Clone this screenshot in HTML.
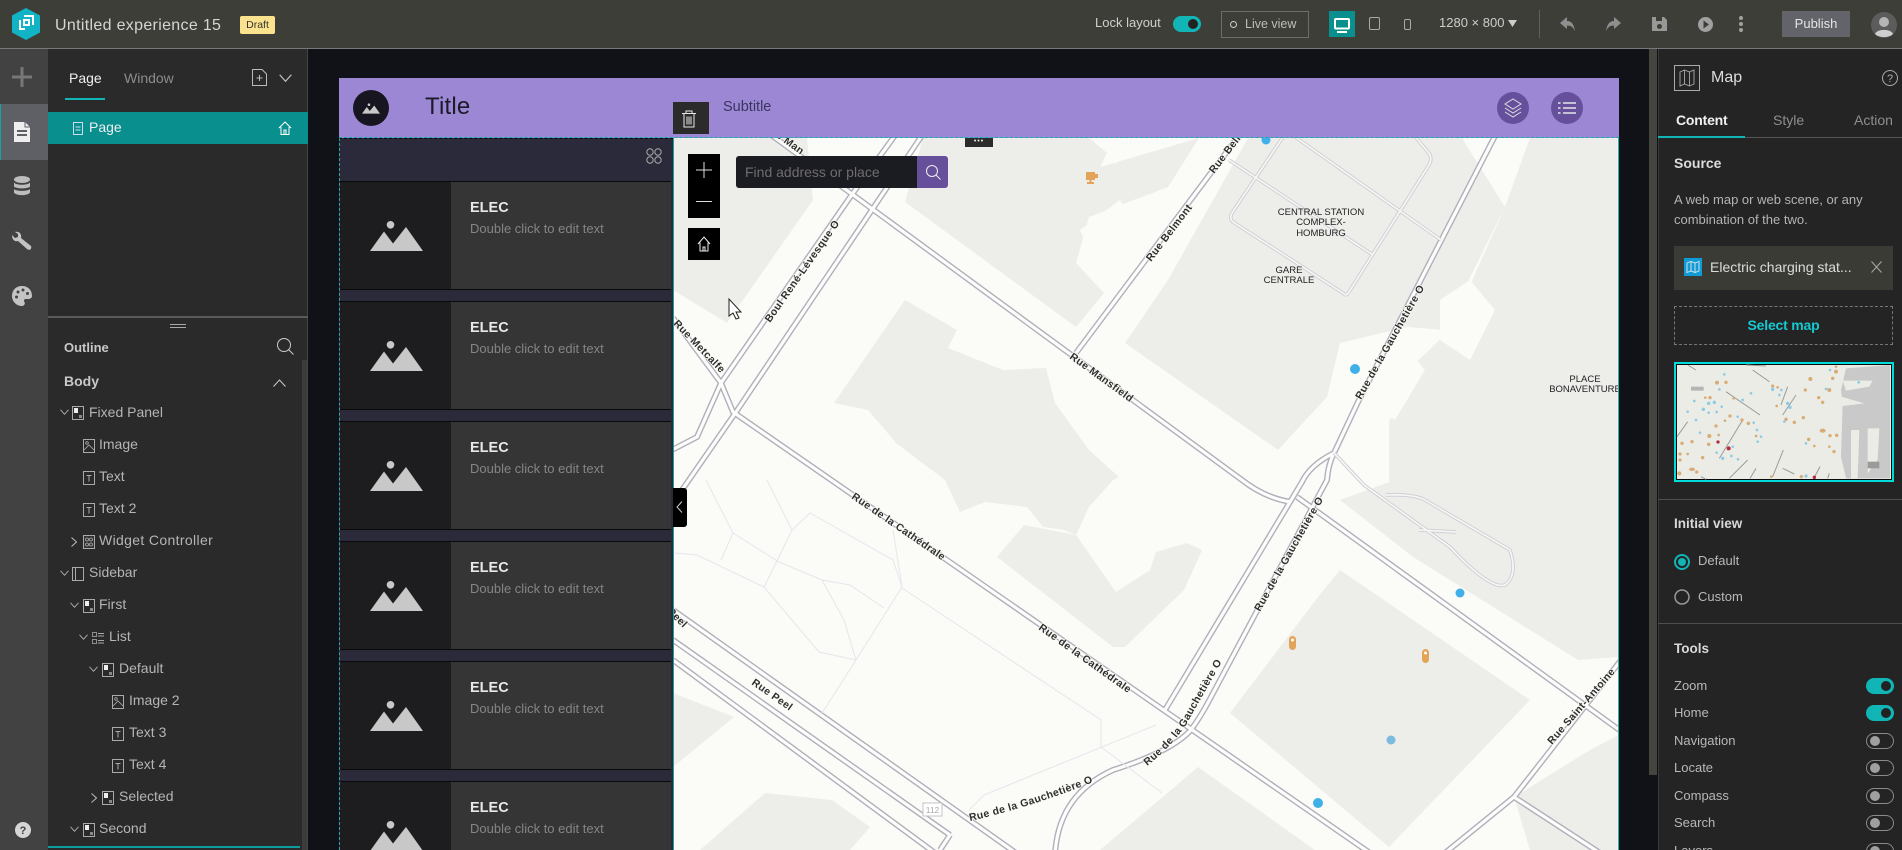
<!DOCTYPE html>
<html><head><meta charset="utf-8"><title>Experience Builder</title>
<style>
html,body{margin:0;padding:0;width:1902px;height:850px;overflow:hidden;background:#111118}
body{position:relative;font-family:"Liberation Sans",sans-serif;color:#ddd}
.a{position:absolute}
.t{position:absolute;white-space:nowrap;line-height:20px;height:20px}
.i{position:absolute;overflow:visible}
.row{color:#b5b5b5;font-size:14px}
.card{position:absolute;left:340px;width:331px;height:108px;background:#353535;border-top:1px solid #0a0a0a;border-bottom:1px solid #0a0a0a;box-sizing:border-box}
.card .im{position:absolute;left:0;top:0;width:111px;height:106px;background:#1d1d1f}
.card .e{position:absolute;left:130px;top:16px;font-size:14.5px;font-weight:bold;color:#e8e8e8;line-height:20px}
.card .d{position:absolute;left:130px;top:37px;font-size:13px;color:#858585;line-height:20px;white-space:nowrap}
.tool{color:#b8b8b8;font-size:13px}
.sw{position:absolute;left:1866px;width:28px;height:16px;border-radius:8px;box-sizing:border-box}
.sw.on{background:#12b5b5}
.sw.on:after{content:"";position:absolute;right:3px;top:3px;width:10px;height:10px;border-radius:50%;background:#222}
.sw.off{border:1px solid #8a8a8a}
.sw.off:after{content:"";position:absolute;left:3px;top:2px;width:10px;height:10px;border-radius:50%;background:#a0a0a0}
text{font-family:"Liberation Sans",sans-serif}
.lb{font-size:10.5px;font-weight:bold;fill:#2e2e2e;letter-spacing:.35px;paint-order:stroke;stroke:#fbfbf6;stroke-width:1.6px}
.lc{font-size:9.5px;fill:#222;text-anchor:middle}
</style></head><body>
<svg width="0" height="0" style="position:absolute">
<defs>
<symbol id="w" viewBox="0 0 12 14"><rect x=".5" y=".5" width="11" height="13" fill="none" stroke="#aaa"/><rect x="2" y="2" width="4" height="5" fill="#eee"/><rect x="7" y="9" width="3" height="3" fill="#888"/></symbol>
<symbol id="im" viewBox="0 0 12 14"><rect x=".5" y=".5" width="11" height="13" fill="none" stroke="#aaa"/><circle cx="4" cy="4" r="1.3" fill="none" stroke="#aaa" stroke-width=".8"/><path d="M1 11L6 6l5 5" fill="none" stroke="#aaa" stroke-width=".8"/></symbol>
<symbol id="tx" viewBox="0 0 12 14"><rect x=".5" y=".5" width="11" height="13" fill="none" stroke="#aaa"/><path d="M3.5 4.5h5M6 4.5v6" fill="none" stroke="#aaa"/></symbol>
<symbol id="ct" viewBox="0 0 12 14"><rect x=".5" y=".5" width="11" height="13" fill="#333" stroke="#aaa"/><circle cx="4" cy="4.5" r="1.5" fill="none" stroke="#aaa" stroke-width=".8"/><circle cx="8" cy="4.5" r="1.5" fill="none" stroke="#aaa" stroke-width=".8"/><circle cx="4" cy="9.5" r="1.5" fill="none" stroke="#aaa" stroke-width=".8"/><circle cx="8" cy="9.5" r="1.5" fill="none" stroke="#aaa" stroke-width=".8"/></symbol>
<symbol id="sb" viewBox="0 0 12 14"><rect x=".5" y=".5" width="11" height="13" fill="none" stroke="#aaa"/><path d="M3.5 .5v13" stroke="#aaa"/></symbol>
<symbol id="ls" viewBox="0 0 12 14"><rect x=".5" y="1.5" width="4" height="4" fill="none" stroke="#aaa" stroke-width=".8"/><rect x=".5" y="8.5" width="4" height="4" fill="none" stroke="#aaa" stroke-width=".8"/><path d="M6 2.5h6M6 5h6M6 9.5h6M6 12h6" stroke="#aaa" stroke-width=".9"/></symbol>
<symbol id="dn" viewBox="0 0 10 6"><path d="M.5.5L5 5.5 9.5.5" fill="none" stroke="#bbb"/></symbol>
<symbol id="rt" viewBox="0 0 6 10"><path d="M.5.5L5.5 5 .5 9.5" fill="none" stroke="#bbb"/></symbol>
<symbol id="mt" viewBox="0 0 53 30"><circle cx="20.500" cy="3.800" r="3.800" fill="#c8c8c8"/><path d="M0 30L14 10.500 23 22.500 36 6 53 30z" fill="#c8c8c8"/></symbol>
</defs></svg>

<!-- top bar -->
<div class="a" style="left:0;top:0;width:1902px;height:48px;background:#3e3e38;border-bottom:1px solid #77777c"></div>
<svg class="i" style="left:12px;top:8px" width="28" height="32" viewBox="0 0 28 32"><path d="M14 0L28 7.500V24.500L14 32 0 24.500V7.500z" fill="#12b3c4"/><path d="M8 12V21H13M12 8H21V17M12 12H17V17H12z" fill="none" stroke="#fff" stroke-width="2"/></svg>
<div class="t" style="left:55px;top:16px;font-size:16px;letter-spacing:.32px;color:#d5d5d5">Untitled experience 15</div>
<div class="a" style="left:240px;top:16px;width:35px;height:18px;background:#fbe28f;border-radius:2px;color:#333;font-size:10.5px;line-height:18px;text-align:center">Draft</div>
<div class="t" style="left:1095px;top:13px;font-size:13px;color:#d0d0d0">Lock layout</div>
<div class="a" style="left:1173px;top:16px;width:28px;height:16px;border-radius:8px;background:#12b5b5"><div class="a" style="right:3px;top:3px;width:10px;height:10px;border-radius:50%;background:#222"></div></div>
<div class="a" style="left:1221px;top:11px;width:86px;height:25px;border:1px solid #6d6d6d"></div>
<div class="a" style="left:1230px;top:21px;width:5px;height:5px;border:1px solid #ccc;border-radius:50%"></div>
<div class="t" style="left:1245px;top:14px;font-size:12.5px;color:#bdbdbd">Live view</div>
<div class="a" style="left:1329px;top:11px;width:26px;height:26px;background:#0a8f8f"></div>
<svg class="i" style="left:1334px;top:18px" width="16" height="15" viewBox="0 0 16 15"><rect x="1" y="1" width="14" height="9.500" rx="1" fill="none" stroke="#fff" stroke-width="2"/><path d="M3 14h10" stroke="#fff" stroke-width="2"/></svg>
<div class="a" style="left:1369px;top:17px;width:9px;height:11px;border:1.500px solid #aaa;border-radius:2px"></div>
<div class="a" style="left:1404px;top:19px;width:5px;height:9px;border:1.500px solid #aaa;border-radius:2px"></div>
<div class="t" style="left:1439px;top:13px;font-size:13px;color:#ccc">1280 × 800</div>
<svg class="i" style="left:1508px;top:20px" width="9" height="7"><path d="M0 0H9L4.500 7z" fill="#ccc"/></svg>
<div class="a" style="left:1539px;top:10px;width:1px;height:28px;background:#5f5f5f"></div>
<svg class="i" style="left:1559px;top:15px" width="18" height="18" viewBox="0 0 18 18"><path d="M1 8L8 2V6C13 6 15 10 16 16 14 12 12 10.500 8 10.500V14z" fill="#8f8f8f"/></svg>
<svg class="i" style="left:1604px;top:15px" width="18" height="18" viewBox="0 0 18 18"><path d="M17 8L10 2V6C5 6 3 10 2 16 4 12 6 10.500 10 10.500V14z" fill="#8f8f8f"/></svg>
<svg class="i" style="left:1652px;top:16px" width="15" height="16" viewBox="0 0 15 16"><path d="M0 1H12L15 4V15H0z" fill="#989898"/><rect x="4" y="1" width="6" height="4" fill="#3e3e38"/><circle cx="7.500" cy="10.500" r="2.500" fill="#3e3e38"/></svg>
<svg class="i" style="left:1698px;top:17px" width="15" height="15" viewBox="0 0 15 15"><circle cx="7.500" cy="7.500" r="7.500" fill="#a0a0a0"/><path d="M5.500 3.500L11 7.500 5.500 11.500z" fill="#3e3e38"/></svg>
<svg class="i" style="left:1739px;top:15px" width="4" height="18"><circle cx="2" cy="3" r="2" fill="#a0a0a0"/><circle cx="2" cy="9" r="2" fill="#a0a0a0"/><circle cx="2" cy="15" r="2" fill="#a0a0a0"/></svg>
<div class="a" style="left:1782px;top:11px;width:68px;height:26px;background:#63636a;color:#e6e6e6;font-size:13px;line-height:25px;text-align:center">Publish</div>
<svg class="i" style="left:1871px;top:12px" width="26" height="26" viewBox="0 0 26 26"><circle cx="13" cy="13" r="13" fill="#5c5c5c"/><circle cx="13" cy="10" r="5" fill="#b5b5b5"/><path d="M4 22C6 16.500 20 16.500 22 22 18 26 8 26 4 22z" fill="#cfcfcf"/></svg>

<!-- left rail -->
<div class="a" style="left:0;top:49px;width:48px;height:801px;background:#424242"></div>
<div class="a" style="left:0;top:104px;width:48px;height:56px;background:#5f5f66;border-left:1px solid #12a5a5;box-sizing:border-box"></div>
<svg class="i" style="left:12px;top:67px" width="20" height="20"><path d="M10 0V20M0 10H20" stroke="#777" stroke-width="3"/></svg>
<svg class="i" style="left:14px;top:122px" width="16" height="20" viewBox="0 0 16 20"><path d="M0 0H11L16 5V20H0z" fill="#eee"/><path d="M11 0V5H16" fill="none" stroke="#5f5f66"/><path d="M3 9H13M3 13H13" stroke="#5f5f66" stroke-width="2"/></svg>
<svg class="i" style="left:14px;top:176px" width="16" height="20" viewBox="0 0 16 20"><ellipse cx="8" cy="3.500" rx="8" ry="3.500" fill="#bdbdbd"/><path d="M0 6.500C2 9.500 14 9.500 16 6.500V10.500C14 13 2 13 0 10.500zM0 13C2 15.500 14 15.500 16 13V16.500C14 20 2 20 0 16.500z" fill="#bdbdbd"/></svg>
<svg class="i" style="left:12px;top:231px" width="20" height="20" viewBox="0 0 20 20"><path d="M3 1C7 0 10 3 9 7L19 15C20 18 18 20 15 18L6 10C2 11 0 8 0 4L3 7 6 6 6 3z" fill="#c4c4c4"/></svg>
<svg class="i" style="left:12px;top:286px" width="20" height="20" viewBox="0 0 20 20"><path d="M10 0C16 0 20 4 20 10 20 12 18 13 16 13H13.500C12 13 11.500 15 12.500 16 13.500 18 12 20 10 20 4 20 0 15 0 10 0 4 4 0 10 0z" fill="#c4c4c4"/><circle cx="6" cy="6" r="1.500" fill="#424242"/><circle cx="11" cy="4" r="1.500" fill="#424242"/><circle cx="15.500" cy="7.500" r="1.500" fill="#424242"/><circle cx="4.500" cy="11" r="1.500" fill="#424242"/></svg>
<svg class="i" style="left:15px;top:822px" width="16" height="16" viewBox="0 0 16 16"><circle cx="8" cy="8" r="8" fill="#d6d6d6"/><text x="8" y="12" font-size="11" font-weight="bold" fill="#424242" text-anchor="middle">?</text></svg>

<!-- left panel -->
<div class="a" style="left:48px;top:49px;width:260px;height:801px;background:#2a2a2a;border-right:1px solid #444;box-sizing:border-box"></div>
<div class="t" style="left:69px;top:68px;font-size:14px;color:#f0f0f0">Page</div>
<div class="t" style="left:124px;top:68px;font-size:14px;color:#8c8c8c">Window</div>
<div class="a" style="left:65px;top:98px;width:40px;height:2px;background:#12b5b5"></div>
<svg class="i" style="left:252px;top:69px" width="15" height="17" viewBox="0 0 15 17"><path d="M.5.500H10L14.500 5V16.500H.5z" fill="none" stroke="#bbb"/><path d="M7.500 6V12M4.500 9H10.500" stroke="#bbb"/></svg>
<svg class="i" style="left:279px;top:74px" width="13" height="8"><use href="#dn" width="13" height="8"/></svg>
<div class="a" style="left:48px;top:112px;width:260px;height:32px;background:#0a8f8f"></div>
<svg class="i" style="left:73px;top:122px" width="10" height="13" viewBox="0 0 10 13"><rect x=".5" y=".5" width="9" height="12" fill="none" stroke="#cde"/><path d="M2.500 5H7.500M2.500 8H7.500" stroke="#cde"/></svg>
<div class="t" style="left:89px;top:117px;font-size:14px;color:#eee">Page</div>
<svg class="i" style="left:278px;top:121px" width="14" height="14" viewBox="0 0 14 14"><path d="M1 7L7 1 13 7M3 6V13.500H11V6M6 13.500V9H8V13.500" fill="none" stroke="#fff"/></svg>
<div class="a" style="left:48px;top:316px;width:260px;height:2px;background:#5a5a5a"></div>
<div class="a" style="left:170px;top:324px;width:16px;height:1px;background:#aaa"></div>
<div class="a" style="left:170px;top:327px;width:16px;height:1px;background:#aaa"></div>
<div class="t" style="left:64px;top:338px;font-size:13px;font-weight:bold;color:#c8c8c8">Outline</div>
<svg class="i" style="left:277px;top:338px" width="17" height="17" viewBox="0 0 17 17"><circle cx="7" cy="7" r="6.500" fill="none" stroke="#ccc"/><path d="M11.500 11.500L16.500 16.500" stroke="#ccc"/></svg>
<div class="t" style="left:64px;top:371px;font-size:14px;font-weight:bold;color:#c8c8c8">Body</div>
<svg class="i" style="left:273px;top:379px" width="13" height="8"><path d="M.5 7.500L6.500 1 12.500 7.500" fill="none" stroke="#ccc"/></svg>
<div class="a" style="left:302px;top:360px;width:5px;height:490px;background:#3c3c3c"></div>

<div class="t row" style="left:89px;top:402px">Fixed Panel</div><svg class="i" style="left:60px;top:409px" width="9" height="6"><use href="#dn" width="9" height="6"/></svg><svg class="i" style="left:72px;top:406px" width="12" height="14"><use href="#w" width="12" height="14"/></svg>
<div class="t row" style="left:99px;top:434px">Image</div><svg class="i" style="left:83px;top:439px" width="12" height="14"><use href="#im" width="12" height="14"/></svg>
<div class="t row" style="left:99px;top:466px">Text</div><svg class="i" style="left:83px;top:471px" width="12" height="14"><use href="#tx" width="12" height="14"/></svg>
<div class="t row" style="left:99px;top:498px">Text 2</div><svg class="i" style="left:83px;top:503px" width="12" height="14"><use href="#tx" width="12" height="14"/></svg>
<div class="t row" style="left:99px;top:530px;letter-spacing:.35px">Widget Controller</div><svg class="i" style="left:71px;top:537px" width="6" height="10"><use href="#rt" width="6" height="10"/></svg><svg class="i" style="left:83px;top:535px" width="12" height="14"><use href="#ct" width="12" height="14"/></svg>
<div class="t row" style="left:89px;top:562px">Sidebar</div><svg class="i" style="left:60px;top:570px" width="9" height="6"><use href="#dn" width="9" height="6"/></svg><svg class="i" style="left:72px;top:567px" width="12" height="14"><use href="#sb" width="12" height="14"/></svg>
<div class="t row" style="left:99px;top:594px">First</div><svg class="i" style="left:70px;top:602px" width="9" height="6"><use href="#dn" width="9" height="6"/></svg><svg class="i" style="left:83px;top:599px" width="12" height="14"><use href="#w" width="12" height="14"/></svg>
<div class="t row" style="left:109px;top:626px">List</div><svg class="i" style="left:79px;top:634px" width="9" height="6"><use href="#dn" width="9" height="6"/></svg><svg class="i" style="left:92px;top:631px" width="12" height="14"><use href="#ls" width="12" height="14"/></svg>
<div class="t row" style="left:119px;top:658px">Default</div><svg class="i" style="left:89px;top:666px" width="9" height="6"><use href="#dn" width="9" height="6"/></svg><svg class="i" style="left:102px;top:663px" width="12" height="14"><use href="#w" width="12" height="14"/></svg>
<div class="t row" style="left:129px;top:690px">Image 2</div><svg class="i" style="left:112px;top:695px" width="12" height="14"><use href="#im" width="12" height="14"/></svg>
<div class="t row" style="left:129px;top:722px">Text 3</div><svg class="i" style="left:112px;top:727px" width="12" height="14"><use href="#tx" width="12" height="14"/></svg>
<div class="t row" style="left:129px;top:754px">Text 4</div><svg class="i" style="left:112px;top:759px" width="12" height="14"><use href="#tx" width="12" height="14"/></svg>
<div class="t row" style="left:119px;top:786px">Selected</div><svg class="i" style="left:91px;top:793px" width="6" height="10"><use href="#rt" width="6" height="10"/></svg><svg class="i" style="left:102px;top:791px" width="12" height="14"><use href="#w" width="12" height="14"/></svg>
<div class="t row" style="left:99px;top:818px">Second</div><svg class="i" style="left:70px;top:826px" width="9" height="6"><use href="#dn" width="9" height="6"/></svg><svg class="i" style="left:83px;top:823px" width="12" height="14"><use href="#w" width="12" height="14"/></svg>
<div class="a" style="left:48px;top:846px;width:252px;height:2px;background:#0f9c9c"></div>

<!-- canvas: page -->
<div class="a" style="left:339px;top:78px;width:1280px;height:60px;background:#9c87d5"></div>
<div class="a" style="left:353px;top:90px;width:36px;height:36px;border-radius:50%;background:#17151f"></div>
<svg class="i" style="left:362px;top:102px" width="18" height="13"><use href="#mt" width="18" height="13"/></svg>
<div class="t" style="left:425px;top:92px;font-size:24px;line-height:30px;height:30px;color:#1a1a28;letter-spacing:.2px">Title</div>
<div class="t" style="left:723px;top:97px;font-size:14.5px;color:#3a3560">Subtitle</div>
<div class="a" style="left:1497px;top:92px;width:32px;height:32px;border-radius:50%;background:#66509c"></div>
<svg class="i" style="left:1504px;top:98px" width="18" height="20" viewBox="0 0 18 20" fill="none" stroke="#ddd"><path d="M9 1L17 6 9 11 1 6z"/><path d="M1 10L9 15 17 10M1 14L9 19 17 14"/></svg>
<div class="a" style="left:1551px;top:92px;width:32px;height:32px;border-radius:50%;background:#66509c"></div>
<svg class="i" style="left:1558px;top:101px" width="18" height="14" stroke="#e6e6e6" stroke-width="1.400"><path d="M5 2H18M5 7H18M5 12H18M0 2H2.500M0 7H2.500M0 12H2.500"/></svg>

<!-- sidebar -->
<div class="a" style="left:339px;top:138px;width:334px;height:712px;background:#2a2a3a;border-left:1px dashed #2aa5a5;border-top:1px dashed #0b0b0b;box-sizing:border-box"></div>
<svg class="i" style="left:646px;top:148px" width="16" height="16" fill="none" stroke="#aaa"><circle cx="4" cy="4" r="3.200"/><circle cx="12" cy="4" r="3.200"/><circle cx="4" cy="12" r="3.200"/><circle cx="12" cy="12" r="3.200"/></svg>
<div class="card" style="top:181px;height:109px"><div class="im" style="height:107px"></div><div class="e">ELEC</div><div class="d">Double click to edit text</div><svg class="i" style="left:30px;top:39px" width="53" height="30"><use href="#mt" width="53" height="30"/></svg></div>
<div class="card" style="top:301px;height:109px"><div class="im" style="height:107px"></div><div class="e">ELEC</div><div class="d">Double click to edit text</div><svg class="i" style="left:30px;top:39px" width="53" height="30"><use href="#mt" width="53" height="30"/></svg></div>
<div class="card" style="top:421px;height:109px"><div class="im" style="height:107px"></div><div class="e">ELEC</div><div class="d">Double click to edit text</div><svg class="i" style="left:30px;top:39px" width="53" height="30"><use href="#mt" width="53" height="30"/></svg></div>
<div class="card" style="top:541px;height:109px"><div class="im" style="height:107px"></div><div class="e">ELEC</div><div class="d">Double click to edit text</div><svg class="i" style="left:30px;top:39px" width="53" height="30"><use href="#mt" width="53" height="30"/></svg></div>
<div class="card" style="top:661px;height:109px"><div class="im" style="height:107px"></div><div class="e">ELEC</div><div class="d">Double click to edit text</div><svg class="i" style="left:30px;top:39px" width="53" height="30"><use href="#mt" width="53" height="30"/></svg></div>
<div class="card" style="top:781px;height:109px"><div class="im" style="height:107px"></div><div class="e">ELEC</div><div class="d">Double click to edit text</div><svg class="i" style="left:30px;top:39px" width="53" height="30"><use href="#mt" width="53" height="30"/></svg></div>

<!-- map -->
<svg class="a" style="left:673px;top:138px;background:#fbfbf7" width="946" height="712" viewBox="673 138 946 712">
<defs>
<g id="r" fill="none">
<path d="M923 134L736 412 673 503"/>
<path d="M896 134L853 193 721 383 697 437 672 450"/>
<path d="M1240 134L1076 353"/>
<path d="M770 134L1242 480Q1265 498 1291 502"/>
<path d="M1297 497L1625 734"/>
<path d="M1496 134L1358 402 1334 453Q1310 465 1302 482L1165 710"/>
<path d="M1334 453Q1328 465 1327 480L1211 697Q1200 718 1190 731Q1170 752 1113 770Q1058 795 1055 855"/>
<path d="M673 318L721 383 733 412 1370 853"/>
<path d="M673 610L1016 853"/>
<path d="M673 640L950 835"/>
<path d="M673 660L935 853"/>
<path d="M950 835L940 850"/>
<path d="M1445 853L1514 797 1625 655"/>
<path d="M1514 797L1600 853"/>
</g>
<g id="r2" fill="none">
<path d="M1285 134L1232 213Q1229 218 1233 222L1343 293Q1346 297 1349 292L1429 165Q1433 158 1428 152L1413 134"/>
<path d="M1229 160L1373 255"/>
<path d="M1291 134L1441 240"/>
<path d="M1334 453L1364 485 1450 547Q1490 590 1505 585 1518 575 1510 550L1425 500Q1415 494 1386 495"/>
<path d="M1419 530L1456 532"/>
</g>
</defs>
<g fill="#ededea">
<path d="M673 138H807L813 200 727 323 673 290z"/>
<path d="M923 138H1089L1107 153 1100 167 1199 138 1168 187 1089 217 1076 263 1104 293 1076 327 905 202z"/>
<path d="M1248 138H1462L1505 207 1444 330 1407 327 1340 343 1327 397 1278 450 1125 343 1168 280z"/>
<path d="M1530 138H1619V490H1389V423L1401 377 1450 330 1505 207z"/>
<path d="M905 300L957 330 948 348 1003 370 1046 368 1055 403 1089 450 1119 477 1113 480 1089 507 1076 535 1064 530 1043 527 1027 507 985 502 960 512 945 480 896 443 868 410 834 403z"/>
<path d="M1024 525L1076 535 1116 592 1150 570 1156 552 1187 543 1202 550 1184 590 1125 647 1113 647 997 557z"/>
<path d="M1340 500L1395 480H1619V657L1578 660 1413 557z"/>
<path d="M1340 570L1530 700 1389 847 1230 713 1318 597z"/>
<path d="M1590 750L1619 735V850H1530L1514 797z"/>
<path d="M1198 767L1315 850H1100z"/>
<path d="M765 793L832 800 870 827 850 850H700z"/>
<path d="M673 693L734 717 673 767z"/>
</g>
<g fill="#fbfbf7">
<path d="M1440 300L1470 280 1495 310 1470 360 1440 340z"/>
<path d="M1080 230L1120 200 1150 250 1110 300z"/>
<path d="M1360 400L1400 340 1425 370 1395 420z"/>
<path d="M1105 138L1130 138 1115 165z"/>
</g>
<use href="#r" stroke="#b0b0bc" stroke-width="6"/>
<use href="#r" stroke="#fdfdfb" stroke-width="3.200"/>
<use href="#r2" stroke="#cbcbd4" stroke-width="3.500"/>
<use href="#r2" stroke="#f6f6f2" stroke-width="1.800"/>
<g fill="none" stroke="#e6e6ee" stroke-width="1">
<path d="M767 480L792 530 776 563 764 587 819 652 856 660"/>
<path d="M902 587L856 660 822 713"/>
<path d="M675 553L697 555 764 587"/>
<path d="M706 480L733 533 721 560"/>
<path d="M733 533L779 562 822 580 850 585 884 608"/>
<path d="M810 513L792 530"/>
<path d="M810 513L893 560 902 587"/>
<path d="M902 588L1101 720 1101 747 1162 793"/>
<path d="M1156 725L984 795 969 810"/>
<path d="M822 580L844 620 856 660"/>
<path d="M893 530L902 587"/>
</g>
<rect x="923" y="803" width="19" height="13" fill="#fff" stroke="#c4c4c4"/>
<text x="932.500" y="813" font-size="8.500" fill="#aaa" text-anchor="middle">112</text>
<g fill="#40b0e8">
<circle cx="1355" cy="369" r="5"/><circle cx="1266" cy="140" r="4.500"/><circle cx="1460" cy="593" r="4.500"/><circle cx="1391" cy="740" r="4.500" fill="#7cbbe0"/><circle cx="1318" cy="803" r="5"/>
</g>
<g fill="#e3a45a">
<path d="M1086 172H1095V174H1098V178H1095V180H1091.500V182H1094V184H1087V182H1089.500V180H1086z"/>
<rect x="1289" y="636" width="7" height="14" rx="3.500"/><rect x="1422" y="649" width="7" height="14" rx="3.500"/>
<circle cx="1292.500" cy="640" r="1.500" fill="#fff"/><circle cx="1425.500" cy="653" r="1.500" fill="#fff"/>
</g>
<text class="lb" transform="translate(770 323) rotate(-55)">Boul René-Lévesque O</text>
<text class="lb" transform="translate(1151 262) rotate(-52.600)">Rue Belmont</text>
<text class="lb" transform="translate(1214 174) rotate(-52.600)">Rue Belmont</text>
<text class="lb" text-anchor="end" transform="translate(801 155) rotate(36)">Rue Man</text>
<text class="lb" transform="translate(1069 358) rotate(36)">Rue Mansfield</text>
<text class="lb" transform="translate(673 324) rotate(46)">Rue Metcalfe</text>
<text class="lb" transform="translate(1361 400) rotate(-60.500)">Rue de la Gauchetière O</text>
<text class="lb" transform="translate(1260 612) rotate(-60.600)">Rue de la Gauchetière O</text>
<path id="gp" d="M1147 766Q1170 748 1186 725L1240 630" fill="none"/>
<text class="lb"><textPath href="#gp">Rue de la Gauchetière O</textPath></text>
<path id="gq" d="M970 821Q1040 805 1110 775" fill="none"/>
<text class="lb"><textPath href="#gq">Rue de la Gauchetière O</textPath></text>
<text class="lb" transform="translate(851 498) rotate(34.500)">Rue de la Cathédrale</text>
<text class="lb" transform="translate(1038 629) rotate(35.500)">Rue de la Cathédrale</text>
<text class="lb" transform="translate(751 684) rotate(35)">Rue Peel</text>
<text class="lb" transform="translate(667 612) rotate(45)">Peel</text>
<text class="lb" transform="translate(1552 745) rotate(-49)">Rue Saint-Antoine</text>
<g>
<text class="lc" x="1321" y="215">CENTRAL STATION</text>
<text class="lc" x="1321" y="225">COMPLEX-</text>
<text class="lc" x="1321" y="236">HOMBURG</text>
<text class="lc" x="1289" y="273">GARE</text>
<text class="lc" x="1289" y="283">CENTRALE</text>
<text class="lc" x="1585" y="382">PLACE</text>
<text class="lc" x="1585" y="392">BONAVENTURE</text>
</g>
<path d="M729 299V316L733 313 736 319 739 318 736 312H741z" fill="#fff" stroke="#222"/>
</svg>
<div class="a" style="left:339px;top:137px;width:1280px;border-top:1px dashed #0fb0b0"></div>
<div class="a" style="left:673px;top:138px;width:1px;height:712px;background:#1aa0a0"></div>
<div class="a" style="left:1618px;top:138px;width:1px;height:712px;background:#1ab5b5"></div>
<div class="a" style="left:673px;top:102px;width:36px;height:32px;background:#2b2b2b"></div>
<svg class="i" style="left:681px;top:110px" width="16" height="18" viewBox="0 0 16 18" fill="none" stroke="#e8e8e8"><path d="M1 3.500H15M5 3.500V1H11V3.500M3 3.500V17H13V3.500M6 6.500V14.500M8 6.500V14.500M10 6.500V14.500"/></svg>
<div class="a" style="left:965px;top:138px;width:28px;height:9px;background:#2b2b2b;color:#eee;font-size:7px;line-height:8px;text-align:center;letter-spacing:1px;overflow:hidden">•••</div>
<div class="a" style="left:688px;top:154px;width:32px;height:64px;background:#000"></div>
<svg class="i" style="left:696px;top:162px" width="16" height="48" stroke="#ddd"><path d="M8 0V16M0 8H16M0 39.500H16"/></svg>
<div class="a" style="left:688px;top:228px;width:32px;height:32px;background:#000"></div>
<svg class="i" style="left:696px;top:236px" width="16" height="16" viewBox="0 0 16 16" fill="none" stroke="#eee"><path d="M2 8L8 1 14 8M4 6.500V15H12V6.500M7 15V11H9V15"/></svg>
<div class="a" style="left:736px;top:156px;width:181px;height:32px;background:#1b1b22;border-radius:3px 0 0 3px"></div>
<div class="t" style="left:745px;top:162px;font-size:14px;color:#6e6e6e">Find address or place</div>
<div class="a" style="left:917px;top:156px;width:31px;height:32px;background:#66509c;border-radius:0 3px 3px 0"></div>
<svg class="i" style="left:925px;top:164px" width="16" height="16" fill="none" stroke="#eee"><circle cx="7" cy="7" r="5.500"/><path d="M11 11L15.500 15.500"/></svg>
<div class="a" style="left:673px;top:488px;width:14px;height:39px;background:#000;border-radius:0 3px 3px 0"></div>
<svg class="i" style="left:676px;top:501px" width="7" height="12"><path d="M6 .5L1 6 6 11.500" fill="none" stroke="#ccc"/></svg>

<!-- scrollbar + right panel -->
<div class="a" style="left:1649px;top:49px;width:8px;height:726px;background:#45453f"></div>
<div class="a" style="left:1658px;top:49px;width:244px;height:801px;background:#252424;border-left:1px solid #3a3a3a;box-sizing:border-box"></div>
<svg class="i" style="left:1674px;top:65px" width="26" height="26" viewBox="0 0 26 26" fill="none" stroke="#aaa"><rect x=".5" y=".5" width="25" height="25"/><path d="M6 7L10.500 5 15.500 7 20 5V19L15.500 21 10.500 19 6 21zM10.500 5V19M15.500 7V21" stroke-width=".9"/></svg>
<div class="t" style="left:1711px;top:68px;font-size:16px;color:#ddd">Map</div>
<svg class="i" style="left:1882px;top:70px" width="16" height="16" viewBox="0 0 16 16" fill="none" stroke="#aaa"><circle cx="8" cy="8" r="7.500"/><text x="8" y="12" font-size="11" fill="#aaa" stroke="none" text-anchor="middle">?</text></svg>
<div class="t" style="left:1676px;top:110px;font-size:14px;font-weight:bold;color:#f0f0f0;letter-spacing:-.2px">Content</div>
<div class="t" style="left:1773px;top:110px;font-size:14px;color:#8e8e8e">Style</div>
<div class="t" style="left:1854px;top:110px;font-size:14px;color:#8e8e8e">Action</div>
<div class="a" style="left:1658px;top:137px;width:244px;height:1px;background:#555"></div>
<div class="a" style="left:1658px;top:136px;width:87px;height:2px;background:#12b5b5"></div>
<div class="t" style="left:1674px;top:153px;font-size:14px;font-weight:bold;color:#ddd">Source</div>
<div class="t" style="left:1674px;top:190px;font-size:13px;color:#b3b3b3">A web map or web scene, or any</div>
<div class="t" style="left:1674px;top:210px;font-size:13px;color:#b3b3b3">combination of the two.</div>
<div class="a" style="left:1674px;top:246px;width:219px;height:44px;background:#3b3b36"></div>
<div class="a" style="left:1684px;top:258px;width:18px;height:18px;background:#0f9bd8"></div>
<svg class="i" style="left:1686px;top:261px" width="14" height="12" fill="none" stroke="#e8e8e8" stroke-width=".9"><path d="M1 2L5 .5 9 2 13 .5V10L9 11.500 5 10 1 11.500zM5 .5V10M9 2V11.500"/></svg>
<div class="t" style="left:1710px;top:257px;font-size:14px;color:#dcdcdc">Electric charging stat...</div>
<svg class="i" style="left:1871px;top:261px" width="11" height="12" stroke="#aaa"><path d="M.5 .5L10.500 11.500M10.500 .5L.5 11.500"/></svg>
<div class="a" style="left:1674px;top:306px;width:219px;height:39px;border:1px dashed #777;box-sizing:border-box"></div>
<div class="t" style="left:1674px;top:315px;width:219px;text-align:center;font-size:14px;font-weight:bold;color:#14c9d0;letter-spacing:-.2px">Select map</div>

<svg class="a" style="left:1674px;top:362px" width="220" height="120" viewBox="4 6 660 360">
<rect x="4" y="6" width="660" height="360" fill="#00dcdc"/>
<rect x="10" y="12" width="648" height="348" fill="#0a0a0a"/>
<rect x="13" y="15" width="642" height="342" fill="#ececE6"/>
<path d="M520 25L652 15V355H520L505 290 510 130 505 90z" fill="#c9c9c9"/>
<path d="M510 62H600L590 80 520 92zM505 110L575 130 510 138zM535 210H560L555 355H535zM585 205H620L615 300 585 340z" fill="#ececE6"/>
<rect x="585" y="305" width="35" height="20" fill="#9a9a9a"/>
<rect x="55" y="80" width="38" height="12" fill="#b5b5b5"/>
<g stroke="#9a9a9a" stroke-width="3" fill="none">
<path d="M160 95L262 165M240 30L290 65M13 230L45 185M345 80L325 135M370 105L330 165M210 180L140 295M225 300L170 355M250 325L232 355M332 270L300 350M442 320L425 352M330 325L365 342M470 340L465 355M45 15L70 30M85 350L100 358M220 15L280 18"/>
</g>
<g fill="#d8ac74">
<circle cx="133" cy="68" r="6"/><circle cx="160" cy="67" r="5"/><circle cx="112" cy="113" r="5"/><circle cx="98" cy="113" r="4"/><circle cx="183" cy="115" r="4"/><circle cx="172" cy="168" r="5"/><circle cx="157" cy="182" r="4"/><circle cx="208" cy="180" r="5"/><circle cx="227" cy="190" r="5"/><circle cx="130" cy="198" r="5"/><circle cx="110" cy="228" r="6"/><circle cx="138" cy="225" r="4"/><circle cx="108" cy="253" r="5"/><circle cx="58" cy="245" r="5"/><circle cx="28" cy="250" r="5"/><circle cx="22" cy="282" r="5"/><circle cx="22" cy="300" r="5"/><circle cx="45" cy="282" r="4"/><circle cx="90" cy="293" r="5"/><circle cx="20" cy="340" r="6"/><circle cx="72" cy="336" r="5"/><circle cx="413" cy="57" r="6"/><circle cx="490" cy="35" r="6"/><circle cx="480" cy="55" r="5"/><circle cx="398" cy="90" r="5"/><circle cx="438" cy="113" r="5"/><circle cx="450" cy="127" r="5"/><circle cx="470" cy="90" r="6"/><circle cx="300" cy="78" r="5"/><circle cx="315" cy="82" r="4"/><circle cx="340" cy="178" r="5"/><circle cx="365" cy="187" r="5"/><circle cx="392" cy="173" r="5"/><circle cx="408" cy="238" r="5"/><circle cx="425" cy="258" r="4"/><circle cx="470" cy="260" r="4"/><circle cx="484" cy="275" r="5"/><circle cx="472" cy="227" r="5"/><circle cx="492" cy="226" r="5"/><circle cx="250" cy="228" r="4"/><circle cx="312" cy="138" r="4"/><circle cx="386" cy="350" r="5"/><circle cx="296" cy="350" r="4"/><circle cx="490" cy="20" r="4"/><ellipse cx="450" cy="212" rx="9" ry="6"/><ellipse cx="58" cy="328" rx="9" ry="5"/>
</g>
<g fill="#8dcbe6">
<circle cx="155" cy="43" r="4"/><circle cx="140" cy="88" r="4"/><circle cx="65" cy="123" r="4"/><circle cx="108" cy="130" r="5"/><circle cx="125" cy="127" r="5"/><circle cx="92" cy="148" r="5"/><circle cx="108" cy="158" r="4"/><circle cx="132" cy="156" r="4"/><circle cx="147" cy="140" r="4"/><circle cx="45" cy="155" r="4"/><circle cx="70" cy="180" r="4"/><circle cx="82" cy="218" r="4"/><circle cx="195" cy="170" r="4"/><circle cx="235" cy="100" r="4"/><circle cx="210" cy="120" r="4"/><circle cx="243" cy="188" r="4"/><circle cx="253" cy="210" r="4"/><circle cx="265" cy="230" r="4"/><circle cx="255" cy="245" r="4"/><circle cx="180" cy="260" r="4"/><circle cx="132" cy="278" r="4"/><circle cx="150" cy="295" r="5"/><circle cx="176" cy="288" r="4"/><circle cx="196" cy="298" r="4"/><circle cx="300" cy="88" r="5"/><circle cx="326" cy="90" r="4"/><circle cx="320" cy="105" r="4"/><circle cx="345" cy="130" r="5"/><circle cx="352" cy="142" r="5"/><circle cx="335" cy="185" r="4"/><circle cx="400" cy="250" r="4"/><circle cx="460" cy="87" r="4"/><circle cx="472" cy="30" r="4"/><circle cx="558" cy="67" r="4"/><circle cx="400" cy="348" r="5"/>
</g>
<g fill="#b52a3c"><circle cx="136" cy="246" r="5"/><circle cx="168" cy="265" r="6"/><circle cx="425" cy="352" r="5"/></g>
</svg>

<div class="a" style="left:1658px;top:499px;width:244px;height:1px;background:#4e4e4e"></div>
<div class="t" style="left:1674px;top:514px;font-size:13.5px;font-weight:bold;color:#d8d8d8">Initial view</div>
<svg class="i" style="left:1674px;top:554px" width="16" height="16"><circle cx="8" cy="8" r="7" fill="none" stroke="#12b5b5" stroke-width="2"/><circle cx="8" cy="8" r="4" fill="#12b5b5"/></svg>
<div class="t tool" style="left:1698px;top:551px">Default</div>
<svg class="i" style="left:1674px;top:589px" width="16" height="16"><circle cx="8" cy="8" r="7" fill="none" stroke="#999" stroke-width="1.500"/></svg>
<div class="t tool" style="left:1698px;top:587px">Custom</div>
<div class="a" style="left:1658px;top:623px;width:244px;height:1px;background:#4e4e4e"></div>
<div class="t" style="left:1674px;top:639px;font-size:13.5px;font-weight:bold;color:#d8d8d8">Tools</div>
<div class="t tool" style="left:1674px;top:676px">Zoom</div><div class="sw on" style="top:678px"></div>
<div class="t tool" style="left:1674px;top:703px">Home</div><div class="sw on" style="top:705px"></div>
<div class="t tool" style="left:1674px;top:731px">Navigation</div><div class="sw off" style="top:733px"></div>
<div class="t tool" style="left:1674px;top:758px">Locate</div><div class="sw off" style="top:760px"></div>
<div class="t tool" style="left:1674px;top:786px">Compass</div><div class="sw off" style="top:788px"></div>
<div class="t tool" style="left:1674px;top:813px">Search</div><div class="sw off" style="top:815px"></div>
<div class="t tool" style="left:1674px;top:841px">Layers</div><div class="sw off" style="top:843px"></div>
</body></html>
